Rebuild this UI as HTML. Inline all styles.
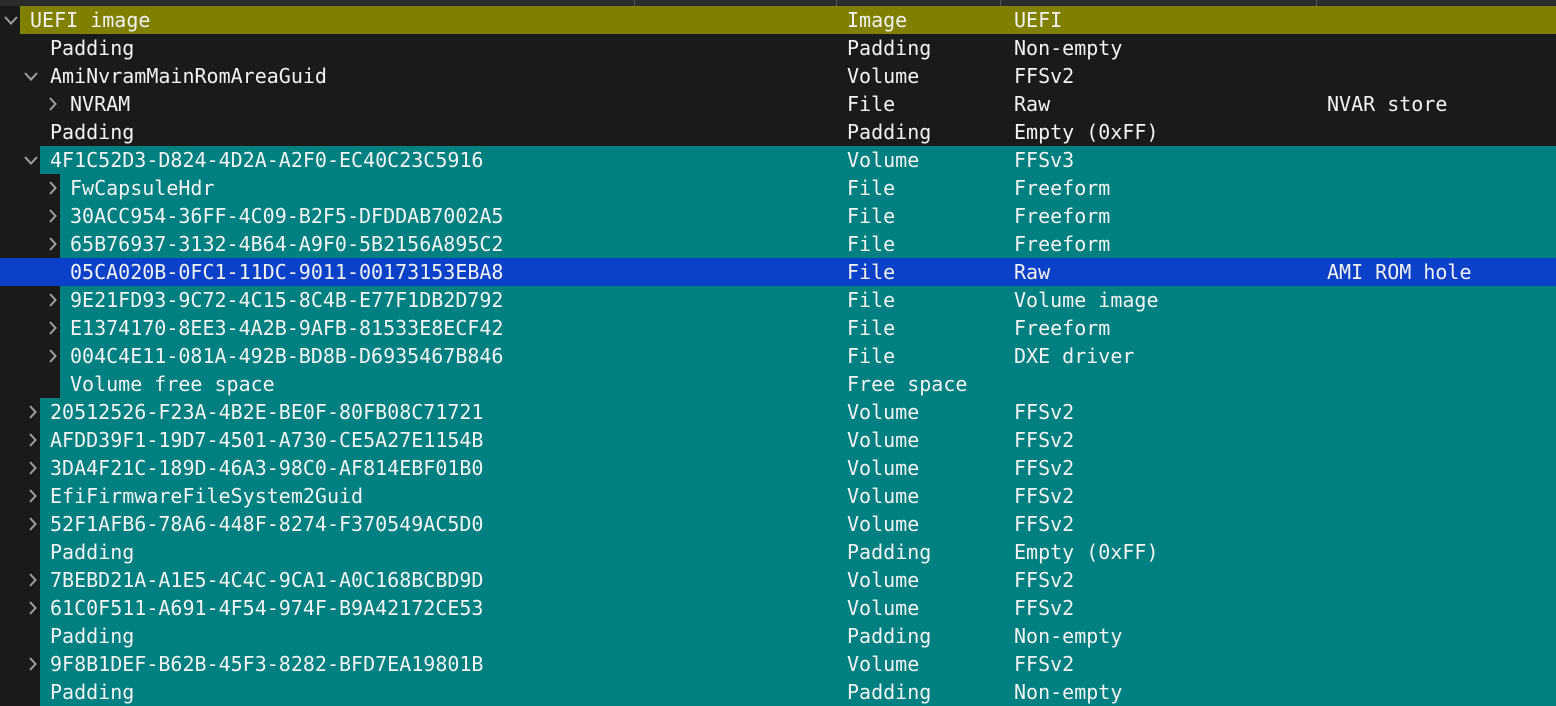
<!DOCTYPE html>
<html><head><meta charset="utf-8"><style>
body{margin:0;width:1556px;height:706px;background:#1a1a1a;overflow:hidden;font-family:"DejaVu Sans Mono","Liberation Mono",monospace;font-size:20px;color:#f2f2f2}
.top{position:absolute;left:0;top:0;width:1556px;height:6px;background:#2c2c2c}
.top i{position:absolute;top:0;width:1px;height:6px;background:#555}
.r{position:absolute;left:0;width:1556px;height:28px;line-height:28px;white-space:pre}
.hl{position:absolute;top:0;bottom:0;right:0}
.t{position:absolute;top:0}
.c{position:absolute;top:0;width:16px;height:28px}
</style></head><body>
<div class="top"><i style="left:634px"></i><i style="left:836px"></i><i style="left:1000px"></i><i style="left:1316px"></i></div>
<div id="L"></div>
<script>
const rows=[
[0,'d','UEFI image','Image','UEFI','','o'],
[1,'','Padding','Padding','Non-empty','',''],
[1,'d','AmiNvramMainRomAreaGuid','Volume','FFSv2','',''],
[2,'r','NVRAM','File','Raw','NVAR store',''],
[1,'','Padding','Padding','Empty (0xFF)','',''],
[1,'d','4F1C52D3-D824-4D2A-A2F0-EC40C23C5916','Volume','FFSv3','','t'],
[2,'r','FwCapsuleHdr','File','Freeform','','t'],
[2,'r','30ACC954-36FF-4C09-B2F5-DFDDAB7002A5','File','Freeform','','t'],
[2,'r','65B76937-3132-4B64-A9F0-5B2156A895C2','File','Freeform','','t'],
[2,'','05CA020B-0FC1-11DC-9011-00173153EBA8','File','Raw','AMI ROM hole','s'],
[2,'r','9E21FD93-9C72-4C15-8C4B-E77F1DB2D792','File','Volume image','','t'],
[2,'r','E1374170-8EE3-4A2B-9AFB-81533E8ECF42','File','Freeform','','t'],
[2,'r','004C4E11-081A-492B-BD8B-D6935467B846','File','DXE driver','','t'],
[2,'','Volume free space','Free space','','','t'],
[1,'r','20512526-F23A-4B2E-BE0F-80FB08C71721','Volume','FFSv2','','t'],
[1,'r','AFDD39F1-19D7-4501-A730-CE5A27E1154B','Volume','FFSv2','','t'],
[1,'r','3DA4F21C-189D-46A3-98C0-AF814EBF01B0','Volume','FFSv2','','t'],
[1,'r','EfiFirmwareFileSystem2Guid','Volume','FFSv2','','t'],
[1,'r','52F1AFB6-78A6-448F-8274-F370549AC5D0','Volume','FFSv2','','t'],
[1,'','Padding','Padding','Empty (0xFF)','','t'],
[1,'r','7BEBD21A-A1E5-4C4C-9CA1-A0C168BCBD9D','Volume','FFSv2','','t'],
[1,'r','61C0F511-A691-4F54-974F-B9A42172CE53','Volume','FFSv2','','t'],
[1,'','Padding','Padding','Non-empty','','t'],
[1,'r','9F8B1DEF-B62B-45F3-8282-BFD7EA19801B','Volume','FFSv2','','t'],
[1,'','Padding','Padding','Non-empty','','t']];
let h='';
rows.forEach((r,i)=>{
 const [d,c,a,b,e,f,k]=r; const tx=30+20*d; const y=6+28*i;
 let bg='';
 if(k==='o')bg=`<div class="hl" style="left:20px;background:#808000"></div>`;
 if(k==='t')bg=`<div class="hl" style="left:${tx-10}px;background:#008080"></div>`;
 if(k==='s')bg=`<div class="hl" style="left:0;background:#0b40c9"></div>`;
 let ch='';const cx=tx-27;
 if(c==='d')ch=`<svg class="c" width="16" height="28" style="left:${cx}px" viewBox="0 0 16 28"><path d="M2 11l6 6.5 6-6.5" fill="none" stroke="#a0a0a0" stroke-width="2"/></svg>`;
 if(c==='r')ch=`<svg class="c" width="16" height="28" style="left:${cx+2}px" viewBox="0 0 16 28"><path d="M5 8l5.5 6-5.5 6" fill="none" stroke="#a0a0a0" stroke-width="2"/></svg>`;
 h+=`<div class="r" style="top:${y}px">${bg}${ch}<span class="t" style="left:${tx}px">${a}</span><span class="t" style="left:847px">${b}</span><span class="t" style="left:1014px">${e}</span><span class="t" style="left:1327px">${f}</span></div>`;
});
document.getElementById('L').innerHTML=h;
</script>
</body></html>
